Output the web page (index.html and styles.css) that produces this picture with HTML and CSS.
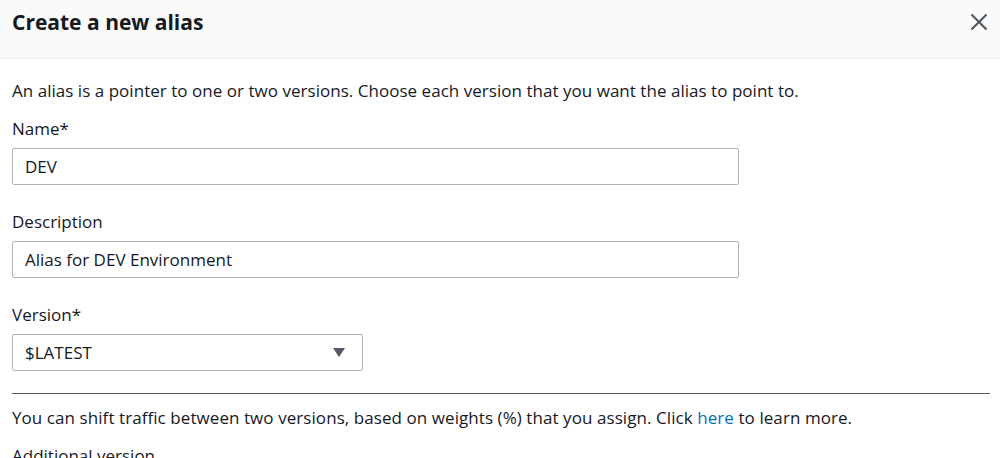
FILE: index.html
```html
<!DOCTYPE html>
<html lang="en">
<head>
<meta charset="utf-8">
<title>Create a new alias</title>
<link rel="stylesheet" href="styles.css">
</head>
<body>
<div class="modal">
  <header class="modal-header">
    <h2 class="modal-title">Create a new alias</h2>
    <button class="close-btn" aria-label="Close">
      <svg width="18" height="18" viewBox="0 0 18 18"><path d="M1.5 1.5 L16.5 16.5 M16.5 1.5 L1.5 16.5" stroke="#545b64" stroke-width="2.2" fill="none"/></svg>
    </button>
  </header>
  <div class="modal-body">
    <p class="intro">An alias is a pointer to one or two versions. Choose each version that you want the alias to point to.</p>
    <div class="field">
      <label class="label">Name*</label>
      <div class="input">DEV</div>
    </div>
    <div class="field">
      <label class="label">Description</label>
      <div class="input">Alias for DEV Environment</div>
    </div>
    <div class="field">
      <label class="label">Version*</label>
      <div class="select">
        <span>$LATEST</span>
        <svg class="caret" width="12" height="9" viewBox="0 0 12 9"><path d="M0 0 H12 L6 9 Z" fill="#545b64"/></svg>
      </div>
    </div>
    <hr class="divider">
    <p class="shift">You can shift traffic between two versions, based on weights (%) that you assign. Click <a href="#" class="link">here</a> to learn more.</p>
    <label class="label extra">Additional version</label>
  </div>
</div>
</body>
</html>
```
FILE: styles.css
```css
* { box-sizing: border-box; }
html, body { margin: 0; padding: 0; background: #fff; }
body {
  font-family: "Open Sans", "Noto Sans", sans-serif;
  font-size: 17px;
  line-height: 22px;
  color: #16191f;
  overflow: hidden;
}
.modal-header {
  height: 59px;
  background: #fafafa;
  border-bottom: 1px solid #eaeded;
  display: flex;
  align-items: center;
  justify-content: space-between;
  padding: 0 12px 0 12px;
}
.modal-title {
  margin: 0;
  font-size: 21px;
  font-weight: 700;
  line-height: 30px;
  margin-top: -15px;
}
.close-btn {
  border: 0;
  background: none;
  padding: 0;
  display: flex;
  margin-top: -14px;
}
.modal-body { padding: 21px 10px 0 12px; }
.intro { margin: 0 0 16px; letter-spacing: 0.03px; }
.field { display: flex; flex-direction: column; gap: 8px; }
.field + .field { margin-top: 26px; }
.label { display: block; }
.input, .select {
  height: 37px;
  border: 1px solid #aab7b8;
  border-radius: 2px;
  padding: 0 12px;
  display: flex;
  align-items: center;
  width: 727px;
}
.select { width: 351px; justify-content: space-between; padding-right: 17px; }
.divider { border: 0; border-top: 1px solid #545b64; margin: 22px 0 13px; }
.shift { margin: 0 0 16px; letter-spacing: 0.07px; }
.link { color: #0073bb; text-decoration: none; }
```
